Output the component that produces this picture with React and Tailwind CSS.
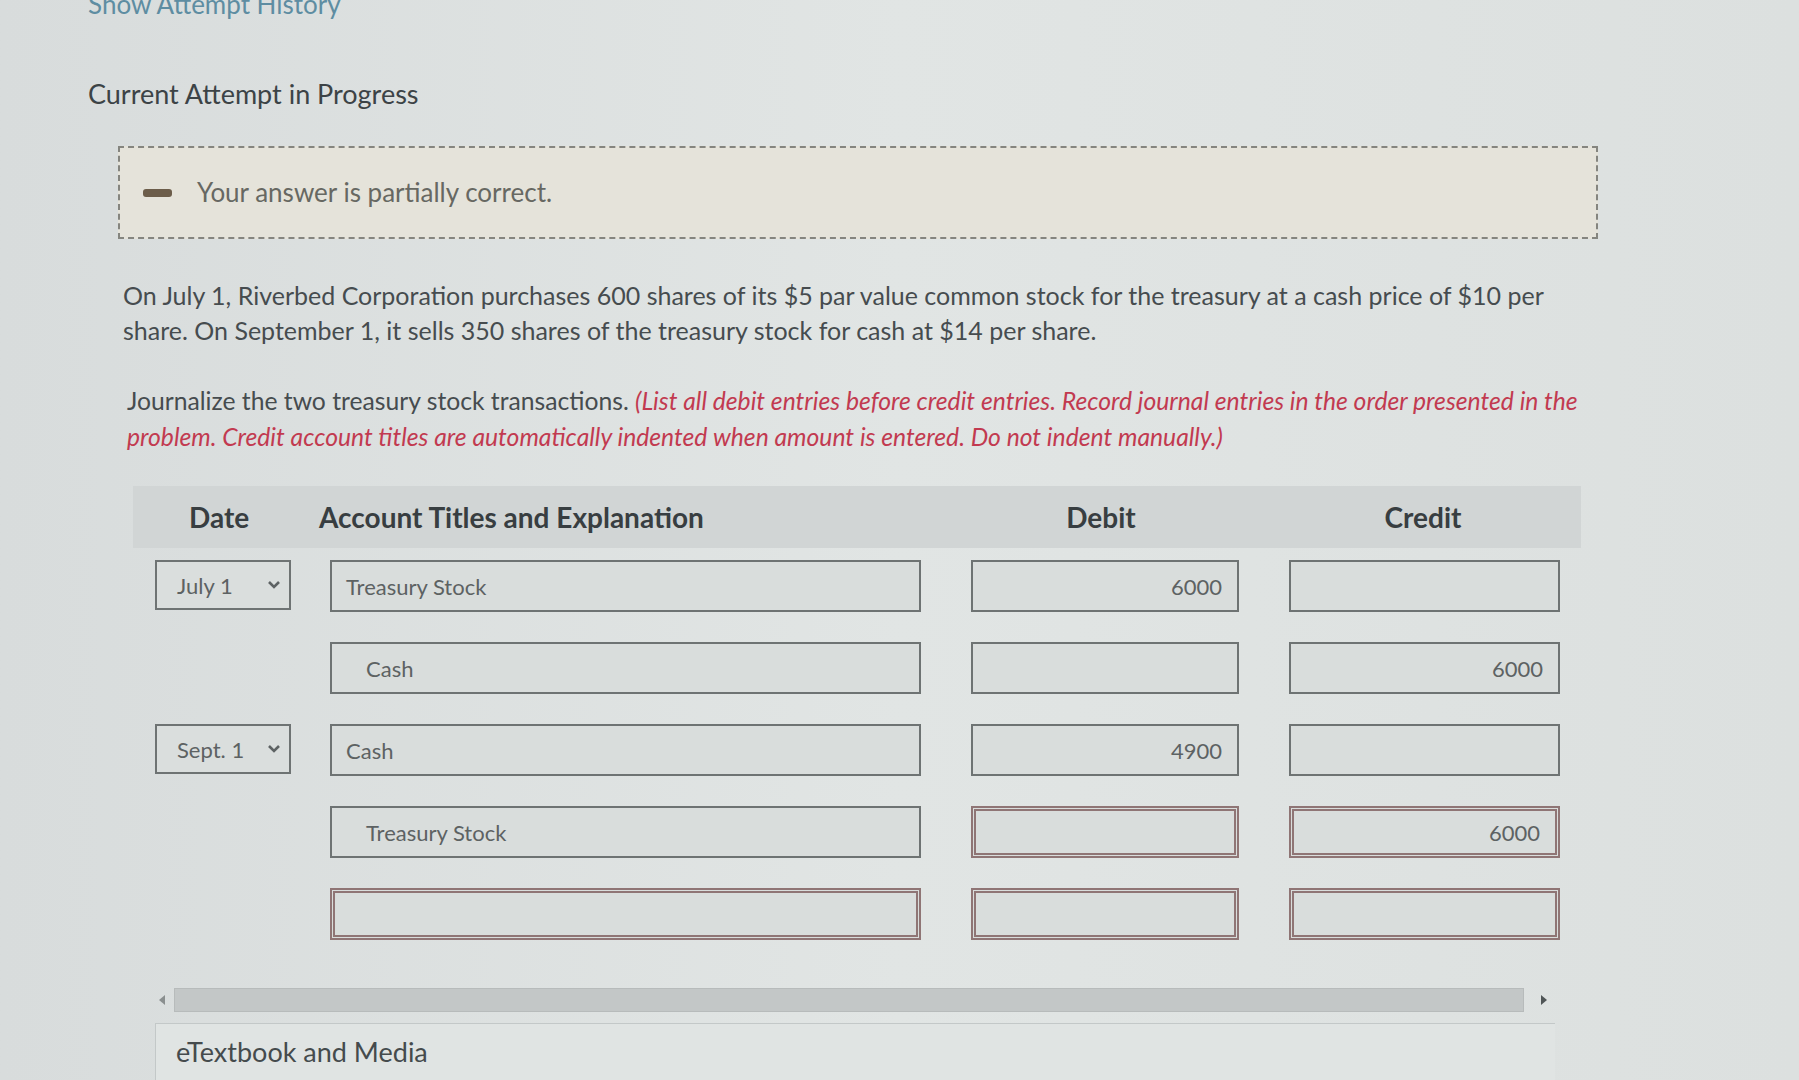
import React from 'react';

const rows = [
  { date: 'July 1', account: 'Treasury Stock', indent: false, debit: '6000', credit: '', err: [false, false, false] },
  { date: '', account: 'Cash', indent: true, debit: '', credit: '6000', err: [false, false, false] },
  { date: 'Sept. 1', account: 'Cash', indent: false, debit: '4900', credit: '', err: [false, false, false] },
  { date: '', account: 'Treasury Stock', indent: true, debit: '', credit: '6000', err: [false, true, true] },
  { date: '', account: '', indent: false, debit: '', credit: '', err: [true, true, true] },
];

function Field({ value, err, align = 'left', indent = false, width }) {
  const border = err
    ? 'border-[5px] border-double border-[#8f7575]'
    : 'border-2 border-[#6e7373]';
  return (
    <div
      className={`${width} h-[52px] flex items-center bg-[#d9dddc] text-[22px] text-[#5d6263] ${border} ${
        align === 'right' ? 'justify-end pr-[15px]' : indent ? 'pl-[34px]' : 'pl-[14px]'
      }`}
    >
      {value}
    </div>
  );
}

function DateSelect({ value }) {
  if (!value) return <div className="w-[136px]" />;
  return (
    <div className="w-[136px] h-[50px] mt-[-2px] flex items-center justify-between border-2 border-[#6e7373] bg-[#dadedd] pl-[20px] pr-[8px] text-[22px] text-[#5d6263]">
      <span>{value}</span>
      <svg width="14" height="10" viewBox="0 0 14 10" className="text-[#5d6263]">
        <path d="M2 2 L7 7 L12 2" fill="none" stroke="currentColor" strokeWidth="2.6" />
      </svg>
    </div>
  );
}

export default function App() {
  return (
    <div className="h-[1080px] w-full overflow-hidden bg-gradient-to-r from-[#d8dcdc] via-[#e1e5e4] to-[#dce0df] font-['Lato','Open_Sans',sans-serif]">
      <div className="pl-[88px]">
        {/* header */}
        <div className="mt-[-10px] text-[26px] leading-[28px] text-[#5e8da2]">Show Attempt History</div>
        <h2 className="mt-[61px] text-[27px] leading-[30px] text-[#3c4346]">Current Attempt in Progress</h2>

        {/* feedback box */}
        <div className="ml-[30px] mt-[37px] w-[1480px] h-[93px] flex items-center border-2 border-dashed border-[#85857f] bg-[#e5e3da]">
          <div className="ml-[23px] w-[29px] h-[8px] rounded-[3px] bg-[#6c5d4a]" />
          <span className="ml-[25px] text-[26px] text-[#676862]">Your answer is partially correct.</span>
        </div>

        {/* question */}
        <p className="ml-[35px] mt-[39px] text-[25px] leading-[35px] text-[#464c4f] whitespace-nowrap">
          On July 1, Riverbed Corporation purchases 600 shares of its $5 par value common stock for the treasury at a cash price of $10 per
          <br />
          share. On September 1, it sells 350 shares of the treasury stock for cash at $14 per share.
        </p>

        <p className="ml-[39px] mt-[35px] text-[24.7px] leading-[36px] text-[#464c4f] whitespace-nowrap">
          Journalize the two treasury stock transactions.{' '}
          <span className="italic text-[#c23a50]">
            (List all debit entries before credit entries. Record journal entries in the order presented in the
            <br />
            problem. Credit account titles are automatically indented when amount is entered. Do not indent manually.)
          </span>
        </p>

        {/* journal table */}
        <div className="ml-[45px] mt-[31px] w-[1448px]">
          <div className="h-[62px] flex items-center bg-[#d1d5d5] font-bold text-[28px] text-[#383e41]">
            <div className="w-[186px] pl-[56px]">Date</div>
            <div className="w-[649px]">Account Titles and Explanation</div>
            <div className="w-[266px] text-center">Debit</div>
            <div className="w-[59px]" />
            <div className="w-[260px] text-center">Credit</div>
          </div>

          <div className="mt-[12px] flex flex-col gap-[30px] pl-[22px]">
            {rows.map((r, i) => (
              <div key={i} className="flex items-center">
                <DateSelect value={r.date} />
                <div className="ml-[39px]">
                  <Field value={r.account} indent={r.indent} err={r.err[0]} width="w-[591px]" />
                </div>
                <div className="ml-[50px]">
                  <Field value={r.debit} align="right" err={r.err[1]} width="w-[268px]" />
                </div>
                <div className="ml-[50px]">
                  <Field value={r.credit} align="right" err={r.err[2]} width="w-[271px]" />
                </div>
              </div>
            ))}
          </div>

          {/* scrollbar */}
          <div className="mt-[48px] ml-[25px] flex items-center gap-[8px]">
            <svg width="8" height="12" viewBox="0 0 8 12">
              <path d="M7 1 L1 6 L7 11 Z" fill="#8a8f8f" />
            </svg>
            <div className="w-[1350px] h-[24px] bg-[#c3c7c7] border border-[#b7bbbb]" />
            <svg width="8" height="12" viewBox="0 0 8 12" className="ml-[8px]">
              <path d="M1 1 L7 6 L1 11 Z" fill="#4f5556" />
            </svg>
          </div>
        </div>

        {/* etextbook */}
        <div className="ml-[67px] mt-[11px] w-[1400px] h-[80px] border-t border-l border-[#c3c8c8] bg-[#e0e4e3] pl-[20px] pt-[8px] text-[27px] text-[#454b4d]">
          eTextbook and Media
        </div>
      </div>
    </div>
  );
}
